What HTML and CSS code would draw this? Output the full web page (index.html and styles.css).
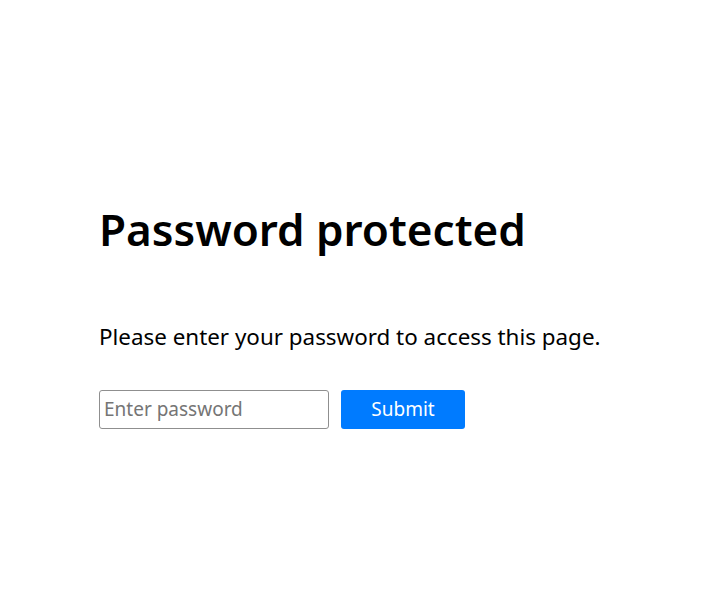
FILE: index.html
```html
<!DOCTYPE html>
<html lang="en">
<head>
    <meta charset="UTF-8">
    <meta name="viewport" content="width=device-width, initial-scale=1.0">
    <title>Password protected</title>
    <link rel="stylesheet" href="styles.css">
</head>
<body>
    <main class="page">
        <div class="protect-box">
            <h1>Password protected</h1>
            <p class="protect-text">Please enter your password to access this page.</p>
            <form class="protect-form" onsubmit="return false;">
                <input type="password" class="password-input" placeholder="Enter password">
                <button type="submit" class="btn-submit">Submit</button>
            </form>
        </div>
    </main>
</body>
</html>
```

FILE: styles.css
```css
/* General Styling */
html, body {
    margin: 0;
    padding: 0;
    height: 100%;
}

body {
    font-family: "Noto Sans", "Open Sans", sans-serif;
    background-color: #fff;
    color: #000;
}

.page {
    padding: 203px 0 0 99px;
    box-sizing: border-box;
}

.protect-box h1 {
    font-size: 44px;
    font-weight: 600;
    margin: 0 0 66px 0;
    line-height: 1.2;
}

.protect-text {
    font-size: 22.4px;
    margin: 0 0 37px 0;
    line-height: 1.375;
}

.protect-form {
    display: flex;
    gap: 12px;
}

.password-input {
    width: 230px;
    height: 39px;
    box-sizing: border-box;
    padding: 0 4px;
    font-family: inherit;
    font-size: 19px;
    border: 1px solid #8f8f8f;
    border-radius: 3px;
    color: #000;
}

.password-input::placeholder {
    color: #757575;
}

.btn-submit {
    width: 124px;
    height: 39px;
    font-family: inherit;
    font-size: 19px;
    border: none;
    border-radius: 3px;
    background-color: #007bff;
    color: #fff;
    cursor: pointer;
}
```
